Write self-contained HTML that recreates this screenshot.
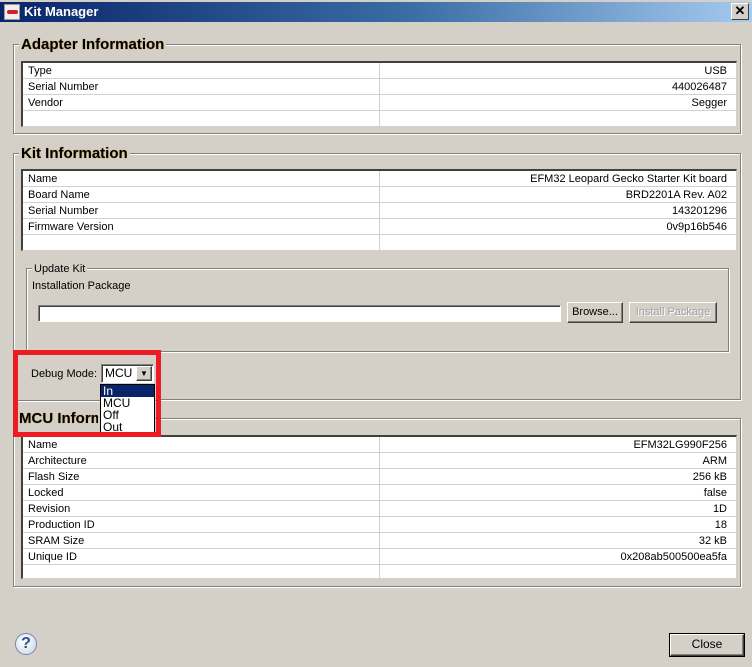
<!DOCTYPE html>
<html><head><style>
*{margin:0;padding:0;box-sizing:border-box}
body{width:752px;height:667px;background:#d4d0c8;font-family:"Liberation Sans",sans-serif;font-size:11px;color:#000;position:relative;overflow:hidden}
.a{position:absolute}
.frame{position:absolute;border:1px solid #808080;box-shadow:inset 1px 1px 0 #fff,1px 1px 0 #fff}
.gt{position:absolute;background:#d4d0c8;font-weight:bold;font-size:15px;padding:0 2px;line-height:18px;color:#000;text-shadow:0 0 1px #c08000}
.tbl{position:absolute;background:#fff;border-top:2px solid #404040;border-left:2px solid #404040;border-right:1px solid #d4d0c8;border-bottom:1px solid #d4d0c8}
.row{height:16px;border-bottom:1px solid #d0d0d0;position:relative;line-height:17px}
.row .l{position:absolute;left:5px}
.row .r{position:absolute;right:9px}
.col{position:absolute;left:356px;top:0;bottom:0;width:1px;background:#d0d0d0}
.btn{position:absolute;border:1px solid;border-color:#fff #404040 #404040 #fff;box-shadow:inset -1px -1px 0 #808080;text-align:center;line-height:18px;font-size:11px}
</style></head><body>
<div class="a" style="left:0;top:2px;width:752px;height:20px;background:linear-gradient(90deg,#0a246a,#3a6ea5 55%,#a6caf0)"></div>
<div class="a" style="left:4px;top:4px;width:16px;height:16px;background:#eee;border:1px solid #999"><div class="a" style="left:2px;top:5px;width:11px;height:4px;background:#d0202a;border-radius:2px"></div></div>
<div class="a" style="left:24px;top:4px;color:#fff;font-weight:bold;font-size:13px;line-height:16px">Kit Manager</div>
<div class="a" style="left:731px;top:3px;width:18px;height:17px;background:#d4d0c8;border:1px solid;border-color:#fff #404040 #404040 #fff;font-weight:bold;font-size:13px;line-height:14px;text-align:center">✕</div>

<div class="frame" style="left:13px;top:44px;width:728px;height:90px"></div>
<div class="gt" style="left:19px;top:36px">Adapter Information</div>
<div class="tbl" style="left:21px;top:61px;width:716px;height:66px">
<div class="col"></div>
<div class="row"><span class="l">Type</span><span class="r">USB</span></div>
<div class="row"><span class="l">Serial Number</span><span class="r">440026487</span></div>
<div class="row"><span class="l">Vendor</span><span class="r">Segger</span></div>
</div>

<div class="frame" style="left:13px;top:153px;width:728px;height:247px"></div>
<div class="gt" style="left:19px;top:145px">Kit Information</div>
<div class="tbl" style="left:21px;top:169px;width:716px;height:82px">
<div class="col"></div>
<div class="row"><span class="l">Name</span><span class="r">EFM32 Leopard Gecko Starter Kit board</span></div>
<div class="row"><span class="l">Board Name</span><span class="r">BRD2201A Rev. A02</span></div>
<div class="row"><span class="l">Serial Number</span><span class="r">143201296</span></div>
<div class="row"><span class="l">Firmware Version</span><span class="r">0v9p16b546</span></div>
</div>
<div class="frame" style="left:26px;top:268px;width:703px;height:84px"></div>
<div class="a" style="left:32px;top:262px;background:#d4d0c8;padding:0 2px;line-height:14px">Update Kit</div>
<div class="a" style="left:32px;top:279px;line-height:14px">Installation Package</div>
<div class="a" style="left:38px;top:305px;width:523px;height:17px;background:#fff;border:1px solid;border-color:#808080 #fff #fff #808080;box-shadow:inset 1px 1px 0 #404040"></div>
<div class="btn" style="left:567px;top:302px;width:56px;height:21px">Browse...</div>
<div class="btn" style="left:629px;top:302px;width:88px;height:21px;color:#a0a0a0;text-shadow:1px 1px 0 #fff">Install Package</div>

<div class="frame" style="left:13px;top:418px;width:728px;height:169px"></div>
<div class="gt" style="left:19px;top:410px">MCU Information</div>
<div class="tbl" style="left:21px;top:435px;width:716px;height:144px">
<div class="col"></div>
<div class="row"><span class="l">Name</span><span class="r">EFM32LG990F256</span></div>
<div class="row"><span class="l">Architecture</span><span class="r">ARM</span></div>
<div class="row"><span class="l">Flash Size</span><span class="r">256 kB</span></div>
<div class="row"><span class="l">Locked</span><span class="r">false</span></div>
<div class="row"><span class="l">Revision</span><span class="r">1D</span></div>
<div class="row"><span class="l">Production ID</span><span class="r">18</span></div>
<div class="row"><span class="l">SRAM Size</span><span class="r">32 kB</span></div>
<div class="row"><span class="l">Unique ID</span><span class="r">0x208ab500500ea5fa</span></div>
</div>

<div class="a" style="left:14px;top:351px;width:144px;height:55px;background:#d4d0c8"></div>
<div class="a" style="left:14px;top:400px;width:144px;height:1px;background:#808080"></div>
<div class="a" style="left:14px;top:401px;width:144px;height:1px;background:#fff"></div>
<div class="a" style="left:18px;top:402px;width:84px;height:30px;background:#d4d0c8"></div>
<div class="gt" style="left:19px;top:410px;padding:0;width:79px;overflow:hidden;white-space:nowrap">MCU Information</div>
<div class="a" style="left:31px;top:367px;line-height:14px">Debug Mode:</div>
<div class="a" style="left:101px;top:364px;width:53px;height:19px;background:#fff;border:1px solid;border-color:#808080 #fff #fff #808080;box-shadow:inset 1px 1px 0 #404040;padding-left:3px;line-height:16px;font-size:12px">MCU</div>
<div class="btn" style="left:136px;top:366px;width:16px;height:15px;background:#d4d0c8;font-size:8px;line-height:13px">▼</div>
<div class="a" style="left:100px;top:384px;width:55px;height:50px;background:#fff;border:1px solid #000;font-size:12px;line-height:12px">
<div style="background:#0a246a;color:#fff;padding-left:2px">In</div>
<div style="padding-left:2px">MCU</div>
<div style="padding-left:2px">Off</div>
<div style="padding-left:2px">Out</div>
</div>
<div class="a" style="left:13px;top:350px;width:148px;height:87px;border:5px solid #ed1c24"></div>

<div class="a" style="left:15px;top:633px;width:22px;height:22px;border-radius:50%;background:radial-gradient(circle at 40% 35%,#fff,#c8d4e8);border:1px solid #7088b0;text-align:center;font-weight:bold;font-size:16px;line-height:20px;color:#30508a">?</div>
<div class="a" style="left:669px;top:633px;width:76px;height:24px;border:1px solid #000"></div>
<div class="btn" style="left:670px;top:634px;width:74px;height:22px;line-height:19px;font-size:12px">Close</div>
</body></html>
